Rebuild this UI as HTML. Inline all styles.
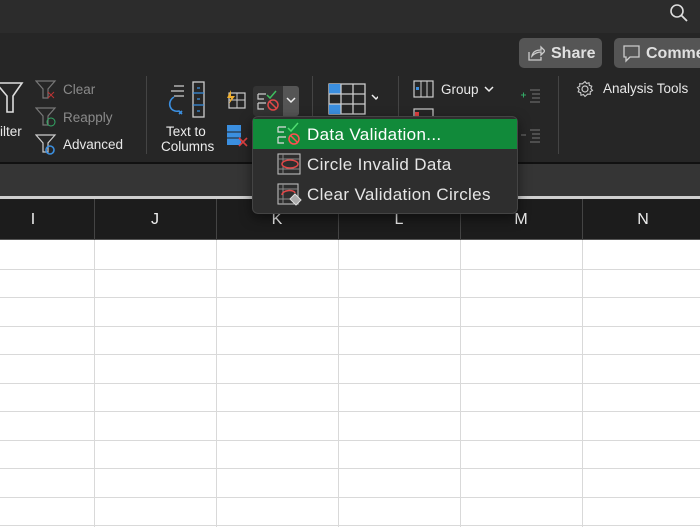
<!DOCTYPE html>
<html><head><style>
*{margin:0;padding:0;box-sizing:border-box}
body{width:700px;height:527px;overflow:hidden;background:#fff;font-family:"Liberation Sans",Arial,sans-serif;position:relative}
.a{position:absolute}
.t{color:#e8e8e8;font-size:13.5px;position:absolute;white-space:nowrap}
.g{color:#8a8a8a}
.vl{position:absolute;top:240px;bottom:0;width:1px;background:#d9d9d9}
.hl{position:absolute;left:0;right:0;height:1px;background:#d9d9d9}
.ch{position:absolute;top:199px;height:41px;width:1px;background:#444}
.cl{position:absolute;top:211px;color:#eee;font-size:16px;width:122px;text-align:center}
.mi{position:absolute;left:307px;font-size:17px;letter-spacing:.35px;color:#e6e6e6;white-space:nowrap}
</style></head><body>
<div class="a" style="left:0;top:0;width:700px;height:33px;background:#2c2c2c"></div>
<svg class="a" style="left:668px;top:2px" width="22" height="22" viewBox="0 0 22 22"><circle cx="9" cy="9" r="6" fill="none" stroke="#ddd" stroke-width="1.6"/><path d="M13.5 13.5L19 19" stroke="#ddd" stroke-width="1.8"/></svg>
<div class="a" style="left:0;top:33px;width:700px;height:130px;background:#262626"></div>
<div class="a" style="left:0;top:162px;width:700px;height:2px;background:#111"></div>
<div class="a" style="left:0;top:164px;width:700px;height:32px;background:#353535"></div>
<div class="a" style="left:0;top:196px;width:700px;height:3px;background:#cfcfcf"></div>
<div class="a" style="left:0;top:199px;width:700px;height:41px;background:#1c1c1c"></div>
<div class="a" style="left:0;top:239px;width:700px;height:1px;background:#555"></div>
<div class="a" style="left:519px;top:38px;width:83px;height:30px;background:#555;border-radius:5px"></div>
<svg class="a" style="left:527px;top:44px" width="18" height="18" viewBox="0 0 18 18"><path d="M2 8v8h12v-3" fill="none" stroke="#ccc" stroke-width="1.3"/><path d="M5 12c1-5 5-6 9-6V3l4 4-4 4V8c-3 0-6 1-9 4z" fill="none" stroke="#ccc" stroke-width="1.3"/></svg>
<div class="t" style="left:551px;top:45px;font-size:16px;font-weight:bold;color:#e0e0e0">Share</div>
<div class="a" style="left:614px;top:38px;width:100px;height:30px;background:#555;border-radius:5px"></div>
<svg class="a" style="left:623px;top:45px" width="18" height="18" viewBox="0 0 18 18"><path d="M1 1h15v11H7l-4 4v-4H1z" fill="none" stroke="#ccc" stroke-width="1.3"/></svg>
<div class="t" style="left:646px;top:45px;font-size:16px;font-weight:bold;color:#e0e0e0">Comme</div>
<svg class="a" style="left:0;top:82px" width="24" height="34" viewBox="0 0 24 34"><path d="M-4 1h26L13 14v16H7V14z" fill="none" stroke="#ddd" stroke-width="1.6"/></svg>
<div class="t" style="left:0;top:124px">ilter</div>
<svg class="a" style="left:35px;top:80px" width="22" height="20"><path d="M1 1h19l-7 8v9h-5V9z" fill="none" stroke="#777" stroke-width="1.2"/><path d="M13 12l6 6M19 12l-6 6" stroke="#b33" stroke-width="1"/></svg>
<div class="t g" style="left:63px;top:82px">Clear</div>
<svg class="a" style="left:35px;top:107px" width="22" height="20"><path d="M1 1h19l-7 8v9h-5V9z" fill="none" stroke="#777" stroke-width="1.2"/><circle cx="16" cy="15" r="4" fill="none" stroke="#3a6" stroke-width="1"/></svg>
<div class="t g" style="left:63px;top:110px">Reapply</div>
<svg class="a" style="left:35px;top:134px" width="22" height="22"><path d="M1 1h19l-7 8v9h-5V9z" fill="none" stroke="#ccc" stroke-width="1.2"/><circle cx="15" cy="16" r="4" fill="none" stroke="#3b8fe0" stroke-width="1.6"/></svg>
<div class="t" style="left:63px;top:137px">Advanced</div>
<div class="a" style="left:146px;top:76px;width:1px;height:78px;background:#444"></div>
<svg class="a" style="left:166px;top:81px" width="42" height="38"><path d="M8 5h10M5 10h13M8 15h10" stroke="#ccc" stroke-width="1.3"/><path d="M8 16c-8 5-4 16 5 14l3 3M16 30l-3 3" fill="none" stroke="#3b8fe0" stroke-width="1.6"/><rect x="27" y="1" width="11" height="35" fill="none" stroke="#ccc" stroke-width="1.3"/><path d="M27 12h11M27 24h11M31 7h3M31 18h3M31 30h3" stroke="#3b8fe0" stroke-width="1.3"/></svg>
<div class="t" style="left:166px;top:124px;color:#ececec">Text to</div>
<div class="t" style="left:161px;top:139px;color:#ececec">Columns</div>
<svg class="a" style="left:225px;top:90px" width="22" height="20"><rect x="4" y="3" width="16" height="15" fill="none" stroke="#ccc" stroke-width="1.2"/><path d="M4 10h16M12 3v15" stroke="#ccc"/><path d="M6 0L2 8h4l-2 6 6-8H6z" fill="#f0b030"/></svg>
<svg class="a" style="left:226px;top:124px" width="24" height="24"><rect x="1" y="1" width="14" height="20" fill="#3b8fe0"/><path d="M1 8h14M1 14h14" stroke="#222"/><path d="M13 14l8 8M21 14l-8 8" stroke="#e04040" stroke-width="1.6"/></svg>
<div class="a" style="left:253px;top:86px;width:46px;height:30px;background:#333;border-radius:3px"></div>
<div class="a" style="left:283px;top:86px;width:16px;height:30px;background:#555;border-radius:0 3px 3px 0"></div>
<svg class="a" style="left:257px;top:90px" width="24" height="22"><path d="M1 4h8M1 4v5h6M1 13h8M1 13v6h6" stroke="#ccc" stroke-width="1.2" fill="none"/><path d="M10 5l3 3 6-7" stroke="#3fbf5f" stroke-width="1.5" fill="none"/><circle cx="16" cy="15" r="5" fill="none" stroke="#e04848" stroke-width="1.5"/><path d="M12.5 11.5l7 7" stroke="#e04848" stroke-width="1.5"/></svg>
<svg class="a" style="left:286px;top:96px" width="10" height="8"><path d="M1 2l4 4 4-4" stroke="#eee" stroke-width="1.5" fill="none"/></svg>
<div class="a" style="left:312px;top:76px;width:1px;height:78px;background:#444"></div>
<svg class="a" style="left:328px;top:83px" width="50" height="40"><rect x="1" y="1" width="36" height="30" fill="none" stroke="#ccc" stroke-width="1.3"/><rect x="1" y="1" width="12" height="10" fill="#3b8fe0"/><rect x="1" y="21" width="12" height="10" fill="#3b8fe0"/><path d="M13 1v30M25 1v30M1 11h36M1 21h36" stroke="#ccc" stroke-width="1.3"/><path d="M44 12l4 4 4-4" stroke="#eee" stroke-width="1.5" fill="none"/></svg>
<div class="a" style="left:398px;top:76px;width:1px;height:78px;background:#444"></div>
<svg class="a" style="left:413px;top:80px" width="22" height="18"><rect x="1" y="1" width="19" height="16" fill="none" stroke="#ccc" stroke-width="1.2"/><path d="M8 1v16M14 1v16" stroke="#ccc"/><rect x="3" y="7" width="3" height="3" fill="#3b8fe0"/></svg>
<div class="t" style="left:441px;top:82px">Group</div>
<svg class="a" style="left:484px;top:85px" width="10" height="8"><path d="M1 2l4 4 4-4" stroke="#eee" stroke-width="1.5" fill="none"/></svg>
<svg class="a" style="left:413px;top:108px" width="22" height="10"><rect x="1" y="1" width="19" height="12" fill="none" stroke="#ccc" stroke-width="1.2"/><rect x="2" y="4" width="4" height="5" fill="#e04040"/></svg>
<svg class="a" style="left:520px;top:88px" width="22" height="16"><path d="M1 7h5M3.5 4.5v5" stroke="#3a6" stroke-width="1"/><path d="M10 2h10M12 6h8M12 10h8M10 14h10" stroke="#777" stroke-width="1"/></svg>
<svg class="a" style="left:520px;top:128px" width="22" height="16"><path d="M1 7h5" stroke="#777" stroke-width="1"/><path d="M10 2h10M12 6h8M12 10h8M10 14h10" stroke="#777" stroke-width="1"/></svg>
<div class="a" style="left:558px;top:76px;width:1px;height:78px;background:#444"></div>
<svg class="a" style="left:576px;top:80px" width="18" height="18" viewBox="0 0 18 18"><circle cx="9" cy="9" r="3" fill="none" stroke="#ccc" stroke-width="1.2"/><path d="M9 1.5l1.5 2 2.5-.8.3 2.6 2.5.9-1 2.3 1.7 2-2.3 1.2.1 2.6-2.6-.2L9 16.5l-1.5-2-2.5.8-.3-2.6-2.5-.9 1-2.3-1.7-2 2.3-1.2-.1-2.6 2.6.2z" fill="none" stroke="#ccc" stroke-width="1.1"/></svg>
<div class="t" style="left:603px;top:81px">Analysis Tools</div>
<div class="ch" style="left:94px"></div><div class="ch" style="left:216px"></div><div class="ch" style="left:338px"></div><div class="ch" style="left:460px"></div><div class="ch" style="left:582px"></div>
<div class="cl" style="left:-28px">I</div><div class="cl" style="left:94px">J</div><div class="cl" style="left:216px">K</div><div class="cl" style="left:338px">L</div><div class="cl" style="left:460px">M</div><div class="cl" style="left:582px">N</div>
<div class="vl" style="left:94px"></div><div class="vl" style="left:216px"></div><div class="vl" style="left:338px"></div><div class="vl" style="left:460px"></div><div class="vl" style="left:582px"></div>
<div class="hl" style="top:269px"></div><div class="hl" style="top:297px"></div><div class="hl" style="top:326px"></div><div class="hl" style="top:354px"></div><div class="hl" style="top:383px"></div><div class="hl" style="top:411px"></div><div class="hl" style="top:440px"></div><div class="hl" style="top:468px"></div><div class="hl" style="top:497px"></div><div class="hl" style="top:525px"></div>
<div class="a" style="left:252px;top:116px;width:266px;height:98px;background:#2e2e2e;border:1px solid #444;border-radius:6px;box-shadow:0 4px 12px rgba(0,0,0,.5)"></div>
<div class="a" style="left:253px;top:119px;width:264px;height:30px;background:#118a3a"></div>
<svg class="a" style="left:277px;top:122px" width="26" height="24"><path d="M1 5h8M1 5v5h6M1 15h8M1 15v6h6" stroke="#ddd" stroke-width="1.2" fill="none"/><path d="M11 6l3 3 7-8" stroke="#4fdc70" stroke-width="1.5" fill="none"/><circle cx="17" cy="17" r="5" fill="none" stroke="#ff5050" stroke-width="1.5"/><path d="M13.5 13.5l7 7" stroke="#ff5050" stroke-width="1.5"/></svg>
<div class="mi" style="top:125px;color:#fff">Data Validation...</div>
<svg class="a" style="left:277px;top:153px" width="26" height="22"><rect x="1" y="1" width="22" height="20" fill="none" stroke="#bbb" stroke-width="1.1"/><path d="M1 6h22M1 16h22M6 1v20" stroke="#888"/><ellipse cx="13" cy="11" rx="8" ry="4" fill="#2e2e2e" stroke="#e04848" stroke-width="1.5"/></svg>
<div class="mi" style="top:155px">Circle Invalid Data</div>
<svg class="a" style="left:277px;top:183px" width="26" height="24"><rect x="1" y="1" width="20" height="20" fill="none" stroke="#bbb" stroke-width="1.1"/><path d="M1 6h20M1 16h20M6 1v20" stroke="#888"/><path d="M5 12c0-5 12-6 13-2" fill="none" stroke="#e04848" stroke-width="1.5"/><path d="M13 16l5-5 6 6-5 5z" fill="#aaa" stroke="#ddd"/></svg>
<div class="mi" style="top:185px">Clear Validation Circles</div>
</body></html>
